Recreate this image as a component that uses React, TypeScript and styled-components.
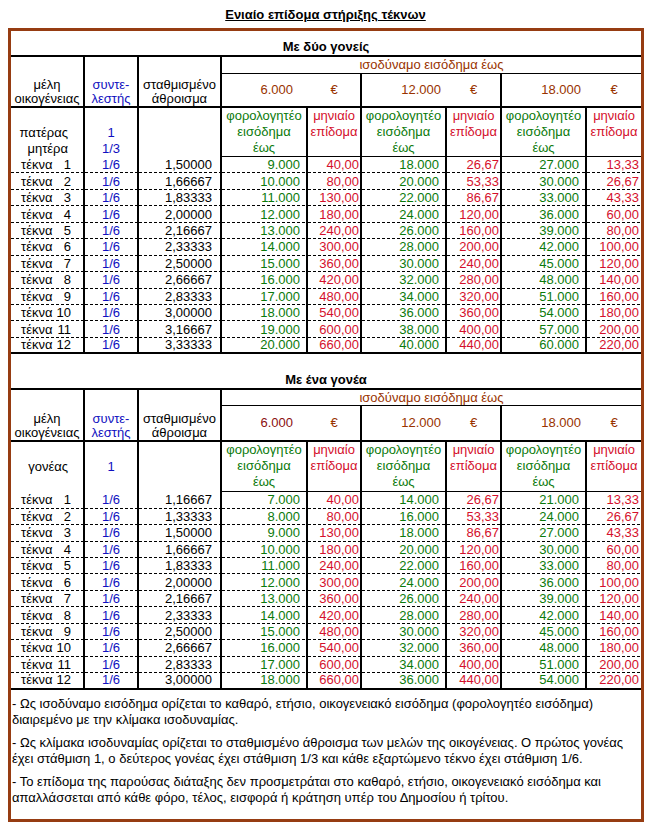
import React from "react";
import styled, { createGlobalStyle, css } from "styled-components";

const BROWN = "#963c12";
const AMOUNT = "#993300";
const GREEN = "#0b7a0b";
const RED = "#d4102c";
const BLUE = "#1010c0";

type Line = "thick" | "thin" | "dash" | "none";

const line = (l?: Line) =>
	l === "thick" ? "2px solid #000" : l === "thin" ? "1px solid #000" : "none";

const GlobalStyle = createGlobalStyle`
	body {
		margin: 0;
		background: #fff;
		font-family: "Liberation Sans", Arial, sans-serif;
	}
`;

const Page = styled.div`
	width: 651px;
	padding-top: 8px;
`;

const Title = styled.h1`
	margin: 0 0 7px;
	text-align: center;
	font-size: 13px;
	line-height: 13px;
	font-weight: bold;
	text-decoration: underline;
	color: #000;
`;

const Frame = styled.div`
	margin-left: 8px;
	width: 630px;
	border: 3px solid ${BROWN};
`;

const Sheet = styled.div<{ $rows: string }>`
	display: grid;
	grid-template-columns: 74px 54px 83px 86px 54px 85px 55px 85px 54px;
	grid-template-rows: ${(p) => p.$rows};
`;

interface CellProps {
	$span?: number;
	$rowSpan?: number;
	$right?: Line;
	$bottom?: Line;
	$color?: string;
	$align?: "left" | "center" | "right";
	$valign?: "start" | "center" | "end";
	$pr?: number;
	$bold?: boolean;
}

const alignMap = { left: "flex-start", center: "center", right: "flex-end" };
const valignMap = { start: "flex-start", center: "center", end: "flex-end" };

const Cell = styled.div<CellProps>`
	grid-column: span ${(p) => p.$span ?? 1};
	grid-row: span ${(p) => p.$rowSpan ?? 1};
	box-sizing: border-box;
	display: flex;
	flex-direction: column;
	align-items: ${(p) => alignMap[p.$align ?? "center"]};
	justify-content: ${(p) => valignMap[p.$valign ?? "center"]};
	text-align: ${(p) => p.$align ?? "center"};
	padding-right: ${(p) => p.$pr ?? 0}px;
	border-right: ${(p) => line(p.$right)};
	border-bottom: ${(p) => line(p.$bottom)};
	color: ${(p) => p.$color ?? "#000"};
	font-size: 13px;
	line-height: 16px;
	font-weight: ${(p) => (p.$bold ? "bold" : "normal")};
	white-space: nowrap;
	${(p) =>
		p.$bottom === "dash" &&
		css`
			background-image: repeating-linear-gradient(to right, #000 0 3px, transparent 3px 5px);
			background-size: 100% 1px;
			background-position: left bottom;
			background-repeat: no-repeat;
		`}
`;

const HeadText = styled.span`
	line-height: 14px;
`;

const Member = styled(Cell)`
	flex-direction: row;
	justify-content: space-between;
	align-items: center;
	gap: 4px;
	padding: 0 12px 0 10px;
`;

const Notes = styled.div`
	padding: 6px 0 13px 1px;
	font-size: 13px;
	line-height: 16px;
	color: #000;
`;

const Note = styled.p`
	margin: 0 0 7px;
	white-space: nowrap;
	&:last-child {
		margin-bottom: 0;
	}
`;

const MONTHLY_A = ["40,00", "80,00", "130,00", "180,00", "240,00", "300,00", "360,00", "420,00", "480,00", "540,00", "600,00", "660,00"];
const MONTHLY_B = ["26,67", "53,33", "86,67", "120,00", "160,00", "200,00", "240,00", "280,00", "320,00", "360,00", "400,00", "440,00"];
const MONTHLY_C = ["13,33", "26,67", "43,33", "60,00", "80,00", "100,00", "120,00", "140,00", "160,00", "180,00", "200,00", "220,00"];

const money = (n: number) => n.toLocaleString("de-DE", { minimumFractionDigits: 0 }).replace(",", ".");

interface SectionProps {
	caption: string;
	rows: string;
	base: number;
	firstAmountColor: string;
	parents: React.ReactNode;
	coeffs: React.ReactNode;
	parentsAlign: "center" | "end";
}

function Section({ caption, rows, base, firstAmountColor, parents, coeffs, parentsAlign }: SectionProps) {
	const weights = Array.from({ length: 12 }, (_, i) => ((6 * base + i + 1) / 6).toFixed(5).replace(".", ","));

	return (
		<Sheet $rows={rows}>
			<Cell $span={9} $bottom="thick" $valign="end" $bold>
				{caption}
			</Cell>

			<Cell $rowSpan={2} $right="thick" $bottom="thick" $valign="end">
				<HeadText>μέλη</HeadText>
				<HeadText>οικογένειας</HeadText>
			</Cell>
			<Cell $rowSpan={2} $right="thick" $bottom="thick" $valign="end" $color={BLUE}>
				<HeadText>συντε-</HeadText>
				<HeadText>λεστής</HeadText>
			</Cell>
			<Cell $rowSpan={2} $right="thick" $bottom="thick" $valign="end">
				<HeadText>σταθμισμένο</HeadText>
				<HeadText>άθροισμα</HeadText>
			</Cell>
			<Cell $span={6} $bottom="thin" $color={AMOUNT}>
				ισοδύναμο εισόδημα έως
			</Cell>

			{[6000, 12000, 18000].map((amount, i) => (
				<React.Fragment key={amount}>
					<Cell $bottom="thick" $align="right" $pr={i === 0 ? 15 : 6} $color={i === 0 ? firstAmountColor : AMOUNT}>
						{money(amount)}
					</Cell>
					<Cell $bottom="thick" $right={i < 2 ? "thick" : "none"} $color={AMOUNT}>
						€
					</Cell>
				</React.Fragment>
			))}

			<Cell $right="thick" $align="right" $pr={15} $valign={parentsAlign}>
				{parents}
			</Cell>
			<Cell $right="thick" $valign={parentsAlign} $color={BLUE}>
				{coeffs}
			</Cell>
			<Cell $right="thick" />
			{[0, 1, 2].map((i) => (
				<React.Fragment key={i}>
					<Cell $right="thick" $bottom="thin" $valign="start" $color={GREEN}>
						<span>φορολογητέο</span>
						<span>εισόδημα</span>
						<span>έως</span>
					</Cell>
					<Cell $right={i < 2 ? "thick" : "none"} $bottom="thin" $valign="start" $color={RED}>
						<span>μηνιαίο</span>
						<span>επίδομα</span>
					</Cell>
				</React.Fragment>
			))}

			{weights.map((w, i) => {
				const bottom: Line = i === 11 ? "thick" : "dash";
				const incomes = [6000, 12000, 18000].map((a) => money(Math.round(a * ((6 * base + i + 1) / 6))));
				const monthly = [MONTHLY_A[i], MONTHLY_B[i], MONTHLY_C[i]];
				return (
					<React.Fragment key={i}>
						<Member $right="thick" $bottom={bottom}>
							<span>τέκνα</span>
							<span>{i + 1}</span>
						</Member>
						<Cell $right="thick" $bottom={bottom} $color={BLUE}>
							1/6
						</Cell>
						<Cell $right="thick" $bottom={bottom} $align="right" $pr={8}>
							{w}
						</Cell>
						{incomes.map((inc, k) => (
							<React.Fragment key={k}>
								<Cell $right="thick" $bottom={bottom} $align="right" $pr={6} $color={GREEN}>
									{inc}
								</Cell>
								<Cell $right={k < 2 ? "thick" : "none"} $bottom={bottom} $align="right" $pr={k < 2 ? 1 : 2} $color={RED}>
									{monthly[k]}
								</Cell>
							</React.Fragment>
						))}
					</React.Fragment>
				);
			})}
		</Sheet>
	);
}

export default function App() {
	return (
		<Page>
			<GlobalStyle />
			<Title>Ενιαίο επίδομα στήριξης τέκνων</Title>
			<Frame>
				<Section
					caption="Με δύο γονείς"
					rows="26px 17px 34px 49px repeat(12, 16.45px)"
					base={4 / 3}
					firstAmountColor={AMOUNT}
					parentsAlign="end"
					parents={
						<>
							<span>πατέρας</span>
							<span>μητέρα</span>
						</>
					}
					coeffs={
						<>
							<span>1</span>
							<span>1/3</span>
						</>
					}
				/>
				<Section
					caption="Με ένα γονέα"
					rows="36px 16px 36px 50px repeat(12, 16.45px)"
					base={1}
					firstAmountColor="#8b1010"
					parentsAlign="center"
					parents={<span>γονέας</span>}
					coeffs={<span>1</span>}
				/>
				<Notes>
					<Note>
						- Ως ισοδύναμο εισόδημα ορίζεται το καθαρό, ετήσιο, οικογενειακό εισόδημα (φορολογητέο εισόδημα)
						<br />
						διαιρεμένο με την κλίμακα ισοδυναμίας.
					</Note>
					<Note>
						- Ως κλίμακα ισοδυναμίας ορίζεται το σταθμισμένο άθροισμα των μελών της οικογένειας. Ο πρώτος γονέας
						<br />
						έχει στάθμιση 1, ο δεύτερος γονέας έχει στάθμιση 1/3 και κάθε εξαρτώμενο τέκνο έχει στάθμιση 1/6.
					</Note>
					<Note>
						- Το επίδομα της παρούσας διάταξης δεν προσμετράται στο καθαρό, ετήσιο, οικογενειακό εισόδημα και
						<br />
						απαλλάσσεται από κάθε φόρο, τέλος, εισφορά ή κράτηση υπέρ του Δημοσίου ή τρίτου.
					</Note>
				</Notes>
			</Frame>
		</Page>
	);
}
